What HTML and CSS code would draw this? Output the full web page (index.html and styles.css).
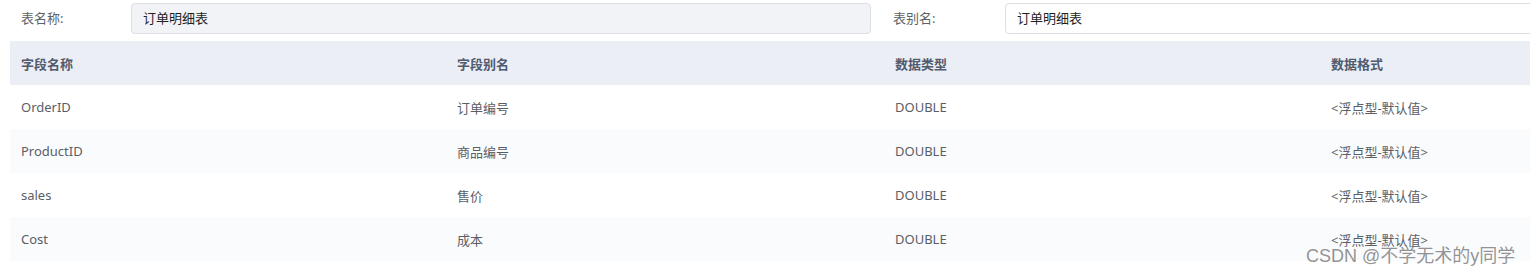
FILE: index.html
```html
<!DOCTYPE html>
<html lang="zh">
<head>
<meta charset="utf-8">
<link rel="stylesheet" href="styles.css">
</head>
<body>
<div class="page">
  <div class="form-row">
    <div class="field first">
      <label class="field-label">表名称:</label>
      <div class="input disabled">订单明细表</div>
    </div>
    <div class="field second">
      <label class="field-label wide">表别名:</label>
      <div class="input">订单明细表</div>
    </div>
  </div>
  <table class="grid">
    <colgroup>
      <col class="c1"><col class="c2"><col class="c3"><col class="c4">
    </colgroup>
    <thead>
      <tr><th>字段名称</th><th>字段别名</th><th>数据类型</th><th>数据格式</th></tr>
    </thead>
    <tbody>
      <tr><td>OrderID</td><td>订单编号</td><td>DOUBLE</td><td>&lt;浮点型-默认值&gt;</td></tr>
      <tr class="striped"><td>ProductID</td><td>商品编号</td><td>DOUBLE</td><td>&lt;浮点型-默认值&gt;</td></tr>
      <tr><td>sales</td><td>售价</td><td>DOUBLE</td><td>&lt;浮点型-默认值&gt;</td></tr>
      <tr class="striped"><td>Cost</td><td>成本</td><td>DOUBLE</td><td>&lt;浮点型-默认值&gt;</td></tr>
    </tbody>
  </table>
  <div class="watermark">CSDN @不学无术的y同学</div>
</div>
</body>
</html>
```
FILE: styles.css
```css
html, body {
  margin: 0;
  padding: 0;
  background: #ffffff;
  overflow: hidden;
}
body {
  width: 1530px;
  height: 276px;
  font-family: "Segoe UI", "Noto Sans", "Noto Sans CJK SC", sans-serif;
  font-size: 13px;
  color: #606266;
}
.page {
  position: relative;
  width: 1530px;
  height: 276px;
  padding-left: 10px;
  box-sizing: border-box;
  overflow: hidden;
}
.form-row {
  display: flex;
  height: 41px;
  padding-top: 3px;
  box-sizing: border-box;
  white-space: nowrap;
}
.field {
  display: flex;
  align-items: flex-start;
}
.field.second {
  margin-left: 11px;
}
.field-label {
  width: 110px;
  padding-left: 11px;
  height: 31px;
  line-height: 31px;
  color: #606266;
}
.field-label.wide {
  width: 112px;
}
.input {
  width: 738px;
  height: 29px;
  line-height: 29px;
  border: 1px solid #dcdfe6;
  border-radius: 4px;
  background: #ffffff;
  color: #1f1f1f;
  padding-left: 11px;
  box-sizing: content-box;
  flex-shrink: 0;
}
.input.disabled {
  width: 727px;
  background: #f2f3f7;
}
.grid {
  border-collapse: collapse;
  table-layout: fixed;
  width: 1520px;
}
.c1 { width: 436px; }
.c2 { width: 438px; }
.c3 { width: 436px; }
.c4 { width: 210px; }
.grid th, .grid td {
  height: 44px;
  padding: 0 11px;
  text-align: left;
  white-space: nowrap;
  overflow: visible;
}
.grid th {
  background: #ebeef5;
  color: #515a6e;
  font-weight: bold;
}
.grid td {
  color: #5a5e66;
}
.grid tr.striped td {
  background: #fafbfd;
}
.watermark {
  position: absolute;
  left: 1306px;
  top: 245px;
  font-family: "Liberation Sans", "Noto Sans CJK SC", sans-serif;
  font-size: 18px;
  line-height: 22px;
  color: rgba(128, 128, 128, 0.85);
  white-space: nowrap;
}
```
